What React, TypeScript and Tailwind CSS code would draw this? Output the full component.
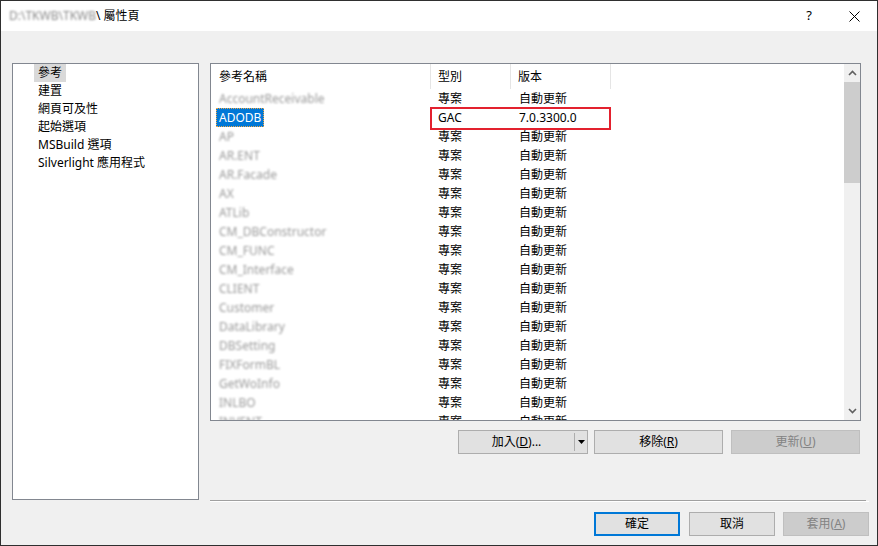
import React from "react";

const FONT = { fontFamily: '"Noto Sans", "Noto Sans CJK TC", sans-serif' };

interface RefRow {
  name: string;
  type: string;
  version: string;
  selected?: boolean;
}

const rows: RefRow[] = [
  { name: "AccountReceivable", type: "專案", version: "自動更新" },
  { name: "ADODB", type: "GAC", version: "7.0.3300.0", selected: true },
  { name: "AP", type: "專案", version: "自動更新" },
  { name: "AR.ENT", type: "專案", version: "自動更新" },
  { name: "AR.Facade", type: "專案", version: "自動更新" },
  { name: "AX", type: "專案", version: "自動更新" },
  { name: "ATLib", type: "專案", version: "自動更新" },
  { name: "CM_DBConstructor", type: "專案", version: "自動更新" },
  { name: "CM_FUNC", type: "專案", version: "自動更新" },
  { name: "CM_Interface", type: "專案", version: "自動更新" },
  { name: "CLIENT", type: "專案", version: "自動更新" },
  { name: "Customer", type: "專案", version: "自動更新" },
  { name: "DataLibrary", type: "專案", version: "自動更新" },
  { name: "DBSetting", type: "專案", version: "自動更新" },
  { name: "FIXFormBL", type: "專案", version: "自動更新" },
  { name: "GetWoInfo", type: "專案", version: "自動更新" },
  { name: "INLBO", type: "專案", version: "自動更新" },
  { name: "INVENT", type: "專案", version: "自動更新" },
];

const navItems = ["參考", "建置", "網頁可及性", "起始選項", "MSBuild 選項", "Silverlight 應用程式"];

function Chevron({ up }: { up?: boolean }) {
  return (
    <svg width="9" height="6" viewBox="0 0 9 6">
      <path
        d={up ? "M1 5 L4.5 1.5 L8 5" : "M1 1 L4.5 4.5 L8 1"}
        fill="none"
        stroke="#606060"
        strokeWidth="1.6"
      />
    </svg>
  );
}

function Btn({
  children,
  width,
  disabled,
  primary,
}: {
  children: React.ReactNode;
  width: string;
  disabled?: boolean;
  primary?: boolean;
}) {
  return (
    <div
      className={`${width} h-[24px] flex items-center justify-center text-[12px] border ${
        disabled
          ? "bg-[#cccccc] border-[#bfbfbf] text-[#838383]"
          : primary
          ? "bg-[#e1e1e1] border-2 border-[#0078d7] text-black"
          : "bg-[#e1e1e1] border-[#adadad] text-black"
      }`}
    >
      {children}
    </div>
  );
}

export default function App() {
  return (
    <div
      className="w-[878px] h-[546px] box-border border border-[#2f2f2f] bg-[#f0f0f0] flex flex-col overflow-hidden text-black"
      style={FONT}
    >
      {/* Title bar */}
      <div className="h-[30px] bg-white flex items-center shrink-0">
        <div className="pl-[8px] text-[12px] flex items-center">
          <span className="blur-[1px] text-[#8a8a8a]">D:\TKWB\TKWB</span>
          <span>\ 屬性頁</span>
        </div>
        <div className="ml-auto flex items-center h-full">
          <div className="w-[46px] h-full flex items-center justify-center text-[13px] pl-[2px]">?</div>
          <div className="w-[46px] h-full flex items-center justify-center">
            <svg width="11" height="11" viewBox="0 0 11 11">
              <path d="M0.5 0.5 L10.5 10.5 M10.5 0.5 L0.5 10.5" stroke="#000" strokeWidth="1" />
            </svg>
          </div>
        </div>
      </div>

      {/* Body */}
      <div className="flex flex-col pt-[32px] pl-[11px] pr-[8px]">
        <div className="flex h-[438px]">
          {/* Left nav */}
          <div className="w-[187px] h-[437px] bg-white border border-[#828790] pl-[21px] text-[12px]">
            {navItems.map((item, i) => (
              <div key={item} className="h-[18px] flex items-center">
                <span className={`px-[4px] leading-[18px] ${i === 0 ? "bg-[#d9d9d9]" : ""}`}>{item}</span>
              </div>
            ))}
          </div>

          {/* Right column */}
          <div className="ml-[11px] w-[656px] flex flex-col">
            <div className="w-[651px]">
              {/* List view */}
              <div className="relative h-[358px] bg-white border border-[#828790] flex overflow-hidden">
                <div className="flex-1 text-[12px]">
                  <div className="h-[25px] flex items-center">
                    <div className="w-[220px] pl-[8px] h-full flex items-center border-r border-[#e5e5e5]">參考名稱</div>
                    <div className="w-[80px] pl-[7px] h-full flex items-center border-r border-[#e5e5e5]">型別</div>
                    <div className="w-[100px] pl-[7px] h-full flex items-center border-r border-[#e5e5e5]">版本</div>
                  </div>
                  {rows.map((r) => (
                    <div key={r.name} className="h-[19px] flex items-center">
                      <div className="w-[220px] pl-[5px] flex items-center">
                        {r.selected ? (
                          <span className="h-[19px] px-[2px] flex items-center bg-[#0078d7] text-white border border-dotted border-[#f0a848]">
                            {r.name}
                          </span>
                        ) : (
                          <span className="px-[3px] text-[#9a9a9a] blur-[1px]">{r.name}</span>
                        )}
                      </div>
                      <div className="w-[80px] pl-[7px]">{r.type}</div>
                      <div className="w-[100px] pl-[8px]">{r.version}</div>
                    </div>
                  ))}
                </div>
                {/* Scrollbar */}
                <div className="w-[16px] bg-[#f0f0f0] flex flex-col">
                  <div className="h-[18px] flex items-center justify-center">
                    <Chevron up />
                  </div>
                  <div className="h-[101px] bg-[#cdcdcd]" />
                  <div className="flex-1" />
                  <div className="h-[18px] flex items-center justify-center">
                    <Chevron />
                  </div>
                </div>
                {/* Highlight annotation */}
                <div className="absolute left-[219px] top-[43px] w-[181px] h-[23px] border-2 border-[#e3212e]" />
              </div>

              {/* Action buttons */}
              <div className="flex justify-end mt-[9px] pr-[1px]">
                <div className="w-[130px] h-[24px] bg-[#e1e1e1] border border-[#adadad] flex text-[12px]">
                  <div className="flex-1 flex items-center justify-center">
                    加入(<span className="underline">D</span>)...
                  </div>
                  <div className="w-[13px] my-[2px] border-l border-[#adadad] flex items-center justify-center">
                    <svg width="7" height="4" viewBox="0 0 7 4">
                      <path d="M0 0 L7 0 L3.5 4 Z" fill="#000" />
                    </svg>
                  </div>
                </div>
                <div className="ml-[6px]">
                  <Btn width="w-[129px]">
                    移除(<span className="underline">R</span>)
                  </Btn>
                </div>
                <div className="ml-[8px]">
                  <Btn width="w-[129px]" disabled>
                    更新(<span className="underline">U</span>)
                  </Btn>
                </div>
              </div>
            </div>
            <div className="mt-auto h-[1px] bg-[#a0a0a0]" />
          </div>
        </div>
        <div className="h-[1px] ml-[198px] bg-white" />

        {/* Dialog buttons */}
        <div className="flex justify-end mt-[10px]">
          <Btn width="w-[86px]" primary>確定</Btn>
          <div className="ml-[9px]">
            <Btn width="w-[86px]">取消</Btn>
          </div>
          <div className="ml-[8px]">
            <Btn width="w-[86px]" disabled>
              套用(<span className="underline">A</span>)
            </Btn>
          </div>
        </div>
      </div>
    </div>
  );
}
